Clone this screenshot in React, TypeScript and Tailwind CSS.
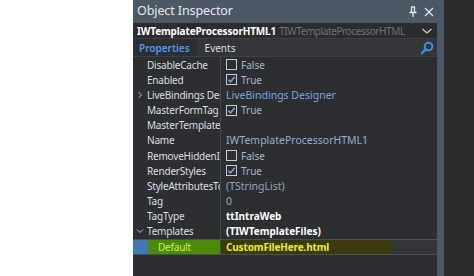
import React from "react";

const F = { fontFamily: '"Noto Sans", "Open Sans", sans-serif' };

function Check({ on }: { on: boolean }) {
  return (
    <span className="w-[11px] h-[11px] border border-[#c9ccd0] flex items-center justify-center mr-[4px] shrink-0">
      {on && (
        <svg width="9" height="9" viewBox="0 0 10 10">
          <path d="M1.5 5.2 L4 7.6 L8.6 2" stroke="#6ea8e0" strokeWidth="1.7" fill="none" />
        </svg>
      )}
    </span>
  );
}

type Row = {
  name: string;
  exp?: "r" | "d";
  val?: React.ReactNode;
};

const vBlue = "text-[#a3b6ca] text-[10px]";

const rows: Row[] = [
  { name: "DisableCache", val: <><Check on={false} /><span className={vBlue}>False</span></> },
  { name: "Enabled", val: <><Check on={true} /><span className={vBlue}>True</span></> },
  { name: "LiveBindings Designer", exp: "r", val: <span className="text-[#7aa6d6] text-[10.5px]">LiveBindings Designer</span> },
  { name: "MasterFormTag", val: <><Check on={true} /><span className={vBlue}>True</span></> },
  { name: "MasterTemplate" },
  { name: "Name", val: <span className="text-[#8fb2d4] text-[10.5px]">IWTemplateProcessorHTML1</span> },
  { name: "RemoveHiddenInputs", val: <><Check on={false} /><span className={vBlue}>False</span></> },
  { name: "RenderStyles", val: <><Check on={true} /><span className={vBlue}>True</span></> },
  { name: "StyleAttributesToIgnore", val: <span className="text-[#8ea6c2] text-[10.5px]">(TStringList)</span> },
  { name: "Tag", val: <span className="text-[#9aa8b8] text-[10.5px]">0</span> },
  { name: "TagType", val: <span className="text-white font-bold">ttIntraWeb</span> },
  { name: "Templates", exp: "d", val: <span className="text-white font-bold">(TIWTemplateFiles)</span> },
];

export default function App() {
  return (
    <div className="w-[474px] h-[276px] flex bg-white overflow-hidden" style={F}>
      <div className="w-[133px] shrink-0 bg-white" />
      <div className="w-[311px] shrink-0 flex flex-col bg-[#4d5865]">
        <div className="h-[23px] flex items-center pl-[4px] pr-[10px] shrink-0">
          <span className="text-[12.5px] text-[#e4e8ec] leading-none tracking-[-0.1px]">Object Inspector</span>
          <div className="ml-auto flex items-center gap-[6px]">
            <svg width="10" height="12" viewBox="0 0 10 12">
              <path d="M3 1 H7 M3.5 1 V6 M6.5 1 V6 M1.5 6.5 H8.5 M5 6.5 V11" stroke="#e4e8ec" strokeWidth="1.3" fill="none" />
            </svg>
            <svg width="10" height="10" viewBox="0 0 10 10">
              <path d="M1 1 L9 9 M9 1 L1 9" stroke="#e4e8ec" strokeWidth="1.2" />
            </svg>
          </div>
        </div>
        <div className="flex flex-1">
          <div className="w-[304px] flex flex-col bg-[#2d2e32]">
            <div className="h-[16px] flex items-center pl-[4px] pr-[4px] bg-[#2b2c30] border-b border-[#3c3f44]">
              <span className="text-[10px] font-bold text-white leading-none tracking-[-0.15px]">IWTemplateProcessorHTML1</span>
              <span className="text-[10px] text-[#6c737c] leading-[14px] ml-[3px] whitespace-nowrap overflow-hidden tracking-[-0.4px]">TIWTemplateProcessorHTML</span>
              <svg className="ml-auto shrink-0" width="12" height="8" viewBox="0 0 12 8">
                <path d="M1.5 2 L6 6 L10.5 2" stroke="#c8ccd0" strokeWidth="1.3" fill="none" />
              </svg>
            </div>
            <div className="h-[18px] flex items-stretch bg-[#333539] border-b border-[#3c3f44]">
              <div className="flex items-center pl-[6px] pr-[7px] bg-[#2d2e32]">
                <span className="text-[10px] font-semibold text-[#4f9be6] leading-none">Properties</span>
              </div>
              <div className="flex items-center px-[8px]">
                <span className="text-[10px] text-[#dcdfe3] leading-none">Events</span>
              </div>
              <div className="ml-auto w-[20px] flex items-center justify-center">
                <svg width="14" height="14" viewBox="0 0 14 14">
                  <circle cx="8.5" cy="5.5" r="3.8" stroke="#3d8fe0" strokeWidth="2" fill="none" />
                  <path d="M5.8 8.2 L1.8 12.2" stroke="#3d8fe0" strokeWidth="2.4" strokeLinecap="round" />
                </svg>
              </div>
            </div>
            <div className="flex flex-col">
              {rows.map((r) => (
                <div key={r.name} className="h-[15.17px] flex items-center text-[10px] leading-none">
                  <div className="w-[88px] h-full flex items-center border-r border-[#44474c] overflow-hidden whitespace-nowrap tracking-[-0.2px]">
                    <span className="w-[14px] shrink-0 flex justify-center">
                      {r.exp === "r" && (
                        <svg width="8" height="8" viewBox="0 0 8 8">
                          <path d="M2.5 1 L5.5 4 L2.5 7" stroke="#b8bcc2" strokeWidth="1" fill="none" />
                        </svg>
                      )}
                      {r.exp === "d" && (
                        <svg width="8" height="8" viewBox="0 0 8 8">
                          <path d="M1 2.5 L4 5.5 L7 2.5" stroke="#b8bcc2" strokeWidth="1" fill="none" />
                        </svg>
                      )}
                    </span>
                    <span className="block w-[73px] overflow-hidden leading-[14px] text-[#dcdfe3]">{r.name}</span>
                  </div>
                  <div className="flex-1 h-full flex items-center pl-[5px] whitespace-nowrap overflow-hidden">
                    {r.val}
                  </div>
                </div>
              ))}
              <div className="h-[16px] flex items-stretch text-[10px] leading-none border-y border-[#4a5059] bg-[#333438]">
                <div className="w-[15px] bg-[#3f78b4]" />
                <div className="w-[73px] bg-[#4a8a08] flex items-center pl-[10px] border-r border-[#44474c] tracking-[-0.2px]">
                  <span className="text-[#d6f03a]">Default</span>
                </div>
                <div className="w-[171px] bg-[#3a3a0c] flex items-center pl-[5px]">
                  <span className="text-[#ecec1c] font-bold tracking-[-0.15px]">CustomFileHere.html</span>
                </div>
                <div className="flex-1" />
              </div>
            </div>
          </div>
          <div className="flex-1" />
        </div>
      </div>
      <div className="flex-1 bg-[#2b2b2d]" />
    </div>
  );
}
